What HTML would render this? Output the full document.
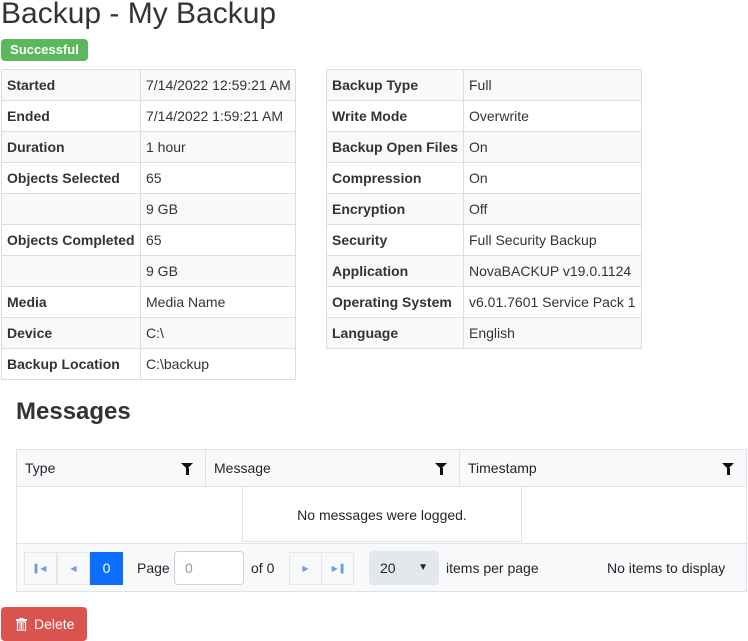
<!DOCTYPE html>
<html><head><meta charset="utf-8"><style>
*{box-sizing:border-box;margin:0;padding:0}
body{width:748px;height:641px;background:#fff;font-family:"Liberation Sans",sans-serif;color:#333;position:relative;overflow:hidden;font-size:14px}
.a{position:absolute}
h1{position:absolute;left:1px;top:-3px;font-weight:400;font-size:30px;color:#333}
.badge{left:1px;top:39px;width:87px;height:22px;background:#5cb85c;border-radius:4px;color:#fff;font-weight:bold;font-size:13px;line-height:21px;text-align:center}
table.k{position:absolute;border-collapse:collapse;table-layout:fixed}
table.k td{border:1px solid #ddd;height:31px;padding:0 5px;font-size:14px;white-space:nowrap;overflow:hidden}
table.k tr:nth-child(odd) td{background:#f9f9f9}
table.k td:first-child{font-weight:bold}
h2{position:absolute;left:16px;top:398px;font-size:24px;font-weight:bold;color:#333}
.grid{left:16px;top:449px;width:731px;height:143px;border:1px solid #dee2e6;font-family:"Liberation Sans",sans-serif;font-size:14px;color:#212529}
.hd{top:0;height:37px;background:#f8f9fa;border-bottom:1px solid #dee2e6;line-height:37px;padding-left:8px}
.f{position:absolute;right:12px;top:13px;width:0;height:0;border-left:6px solid transparent;border-right:6px solid transparent;border-top:6px solid #111}
.f:after{content:"";position:absolute;left:-1.5px;top:-1px;width:3px;height:7px;background:#111}
.pg{left:0;top:93px;width:729px;height:48px;background:#f8f9fa;border-top:1px solid #dee2e6}
.btn{top:8px;width:33px;height:33px;border:1px solid #e5e7ea;background:#f8f9fa;color:#6c9ae6;font-size:8px;text-align:center;line-height:31px}
</style></head><body>
<h1>Backup - My Backup</h1>
<div class="a badge">Successful</div>
<table class="k" style="left:1px;top:69px;width:295px">
<col style="width:139px"><col>
<tr><td>Started</td><td>7/14/2022 12:59:21 AM</td></tr>
<tr><td>Ended</td><td>7/14/2022 1:59:21 AM</td></tr>
<tr><td>Duration</td><td>1 hour</td></tr>
<tr><td>Objects Selected</td><td>65</td></tr>
<tr><td></td><td>9 GB</td></tr>
<tr><td>Objects Completed</td><td>65</td></tr>
<tr><td></td><td>9 GB</td></tr>
<tr><td>Media</td><td>Media Name</td></tr>
<tr><td>Device</td><td>C:\</td></tr>
<tr><td>Backup Location</td><td>C:\backup</td></tr>
</table>
<table class="k" style="left:326px;top:69px;width:316px">
<col style="width:137px"><col>
<tr><td>Backup Type</td><td>Full</td></tr>
<tr><td>Write Mode</td><td>Overwrite</td></tr>
<tr><td>Backup Open Files</td><td>On</td></tr>
<tr><td>Compression</td><td>On</td></tr>
<tr><td>Encryption</td><td>Off</td></tr>
<tr><td>Security</td><td>Full Security Backup</td></tr>
<tr><td>Application</td><td>NovaBACKUP v19.0.1124</td></tr>
<tr><td>Operating System</td><td>v6.01.7601 Service Pack 1</td></tr>
<tr><td>Language</td><td>English</td></tr>
</table>
<h2>Messages</h2>
<div class="a grid">
<div class="a hd" style="left:0;width:189px;border-right:1px solid #dee2e6">Type<span class="f"></span></div>
<div class="a hd" style="left:189px;width:254px;border-right:1px solid #dee2e6">Message<span class="f"></span></div>
<div class="a hd" style="left:443px;width:286px">Timestamp<span class="f"></span></div>
<div class="a" style="left:225px;top:37px;width:280px;height:55px;border:1px solid #dee2e6;border-top:none;text-align:center;line-height:57px">No messages were logged.</div>
<div class="a pg">
<div class="a btn" style="left:7px">&#9612;&#9664;</div>
<div class="a btn" style="left:40px">&#9664;</div>
<div class="a" style="left:73px;top:8px;width:33px;height:33px;background:#0d6efd;color:#fff;text-align:center;line-height:33px;font-size:14px">0</div>
<div class="a" style="left:120px;top:16px">Page</div>
<div class="a" style="left:157px;top:7px;width:70px;height:34px;background:#fff;border:1px solid #ced4da;border-radius:4px;color:#999;padding-left:10px;line-height:32px">0</div>
<div class="a" style="left:234px;top:16px">of 0</div>
<div class="a btn" style="left:272px">&#9654;</div>
<div class="a btn" style="left:304px">&#9654;&#9616;</div>
<div class="a" style="left:352px;top:7px;width:70px;height:34px;background:#e4e7eb;border-radius:4px;padding-left:11px;line-height:34px">20<span style="position:absolute;right:11px;font-size:10px">&#9660;</span></div>
<div class="a" style="left:429px;top:16px">items per page</div>
<div class="a" style="left:590px;top:16px">No items to display</div>
</div>
</div>
<div class="a" style="left:1px;top:607px;width:86px;height:34px;background:#d9534f;border-radius:4px;color:#fff;font-size:14px;line-height:34px;padding-left:33px">Delete
<svg class="a" style="left:15px;top:11px" width="11" height="13" viewBox="0 0 11 13"><rect x="0" y="1" width="11" height="2" fill="#fff"/><rect x="3.5" y="0" width="4" height="1.5" fill="#fff"/><path d="M1.5 4h8v9h-8z" fill="none" stroke="#fff" stroke-width="1.2"/><path d="M4 5v7M5.5 5v7M7 5v7" stroke="#fff" stroke-width="0.9"/></svg></div>
</body></html>
